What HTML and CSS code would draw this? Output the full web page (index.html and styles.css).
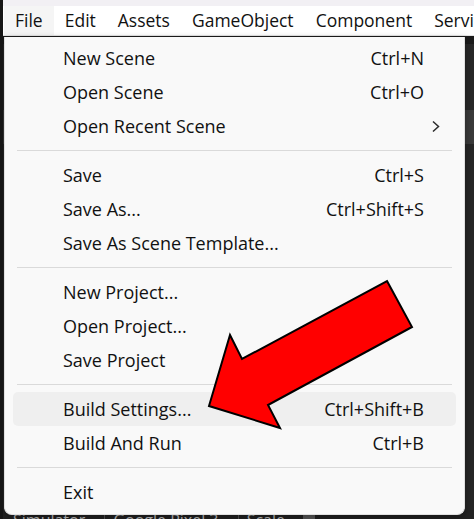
FILE: index.html
```html
<!DOCTYPE html>
<html lang="en">
<head>
<meta charset="utf-8">
<title>Unity File Menu</title>
<link rel="stylesheet" href="styles.css">
</head>
<body>
<div class="app">
  <div class="topstrip"></div>
  <nav class="menubar">
    <span class="menu-title active">File</span>
    <span class="menu-title">Edit</span>
    <span class="menu-title">Assets</span>
    <span class="menu-title">GameObject</span>
    <span class="menu-title">Component</span>
    <span class="menu-title">Services</span>
  </nav>
  <div class="workspace">
    <div class="ws-top"></div>
    <div class="ws-panel"></div>
    <div class="ws-fill"></div>
    <div class="toolbar">
      <span class="tb-item">Simulator <span class="caret">▾</span></span>
      <span class="tb-sep"></span>
      <span class="tb-item">Google Pixel 3 <span class="caret">▾</span></span>
      <span class="tb-sep"></span>
      <span class="tb-item">Scale</span>
      <span class="tb-slider"></span>
    </div>
  </div>

  <div class="dropdown">
    <div class="item"><span class="label">New Scene</span><span class="shortcut">Ctrl+N</span><span class="sub"></span></div>
    <div class="item"><span class="label">Open Scene</span><span class="shortcut">Ctrl+O</span><span class="sub"></span></div>
    <div class="item"><span class="label">Open Recent Scene</span><span class="shortcut"></span><span class="sub"><svg class="chevron" width="10" height="13" viewBox="0 0 10 13"><path d="M2 1.5 L7.5 6.5 L2 11.5" fill="none" stroke="#2b2b2b" stroke-width="1.5"/></svg></span></div>
    <div class="sep"></div>
    <div class="item"><span class="label">Save</span><span class="shortcut">Ctrl+S</span><span class="sub"></span></div>
    <div class="item"><span class="label">Save As...</span><span class="shortcut">Ctrl+Shift+S</span><span class="sub"></span></div>
    <div class="item"><span class="label">Save As Scene Template...</span><span class="shortcut"></span><span class="sub"></span></div>
    <div class="sep"></div>
    <div class="item"><span class="label">New Project...</span><span class="shortcut"></span><span class="sub"></span></div>
    <div class="item"><span class="label">Open Project...</span><span class="shortcut"></span><span class="sub"></span></div>
    <div class="item"><span class="label">Save Project</span><span class="shortcut"></span><span class="sub"></span></div>
    <div class="sep"></div>
    <div class="item hover"><span class="label">Build Settings...</span><span class="shortcut">Ctrl+Shift+B</span><span class="sub"></span></div>
    <div class="item"><span class="label">Build And Run</span><span class="shortcut">Ctrl+B</span><span class="sub"></span></div>
    <div class="sep"></div>
    <div class="item"><span class="label">Exit</span><span class="shortcut"></span><span class="sub"></span></div>
  </div>

  <svg class="callout" width="474" height="519" viewBox="0 0 474 519">
    <polygon points="387,281 412,327 268,405 280,428 209,406 230,335 242,359" fill="#ff0000" stroke="#000" stroke-width="2" stroke-linejoin="miter"/>
  </svg>
</div>
</body>
</html>
```

FILE: styles.css
```css
* { box-sizing: border-box; }

html, body {
  margin: 0;
  padding: 0;
  background: #242424;
}

.app {
  position: relative;
  width: 474px;
  height: 519px;
  overflow: hidden;
  border-left: 3px solid #161616;
  display: flex;
  flex-direction: column;
  font-family: "Open Sans", "Noto Sans", sans-serif;
}

.topstrip {
  height: 6px;
  background: #f2f0f4;
  flex: none;
}

.menubar {
  flex: none;
  height: 30px;
  background: #ffffff;
  border-bottom: 1px solid #e4e4e4;
  display: flex;
  align-items: stretch;
  padding-left: 1px;
  white-space: nowrap;
}

.menu-title {
  display: flex;
  align-items: center;
  padding: 0 11px 1px;
  font-size: 17.5px;
  color: #111111;
}

.menu-title.active {
  background: #f5f5f5;
}

.workspace {
  flex: 1;
  display: flex;
  flex-direction: column;
  background: #282828;
}

.ws-top {
  height: 8px;
  background: #1b1b1b;
}

.ws-panel {
  height: 34px;
  margin-top: 66px;
  background: #3a3a3a;
}

.ws-fill {
  flex: 1;
  background: #262626;
}

.toolbar {
  flex: none;
  height: 9px;
  overflow: hidden;
  display: flex;
  align-items: flex-start;
  gap: 8px;
  padding: 1px 0 0 10px;
  background: #222222;
  color: #c4c4c4;
  font-size: 16px;
  line-height: 18px;
  white-space: nowrap;
}

.caret { color: #e0e0e0; font-size: 13px; }

.tb-sep {
  width: 1px;
  height: 18px;
  background: #555;
}

.tb-slider {
  width: 12px;
  height: 18px;
  margin-left: 10px;
  background: #5a5a5a;
}

.dropdown {
  position: absolute;
  left: 1px;
  top: 37px;
  width: 461px;
  padding: 4px 0 5px;
  background: #f9f9f9;
  border: 1px solid #e0e0e0;
  border-top: none;
  border-radius: 0 0 8px 8px;
  box-shadow: 0 3px 8px rgba(0, 0, 0, 0.35);
  font-size: 18px;
  color: #111111;
}

.item {
  height: 34px;
  margin: 0 8px 0 8px;
  padding-left: 50px;
  display: grid;
  grid-template-columns: 1fr auto 32px;
  align-items: center;
  border-radius: 5px;
  white-space: nowrap;
}

.item.hover {
  background: #efefef;
}

.shortcut {
  text-align: right;
}

.sub {
  display: flex;
  align-items: center;
  padding-left: 7px;
}

.sep {
  height: 1px;
  margin: 7px 12px 7px 12px;
  background: #dadada;
}

.callout {
  position: absolute;
  left: -3px;
  top: 0;
  pointer-events: none;
}
```
